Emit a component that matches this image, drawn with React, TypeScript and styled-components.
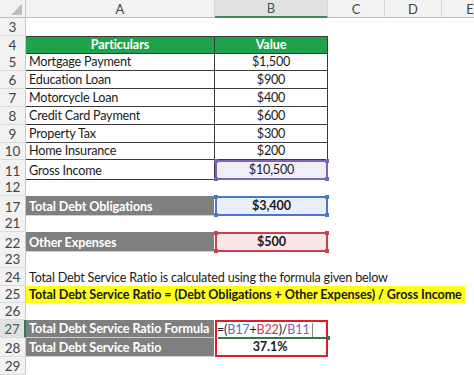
import React from 'react';
import styled, { createGlobalStyle } from 'styled-components';

const GlobalStyle = createGlobalStyle`
  html, body { margin: 0; padding: 0; background: #ffffff; }
  body { font-family: Lato, "Open Sans", "Liberation Sans", sans-serif; overflow: hidden; }
  * { box-sizing: border-box; }
`;

const COLS = '26px 189px 113px 57px 57px 57px';

const Sheet = styled.div`
  width: 474px;
  height: 375px;
  overflow: hidden;
  display: flex;
  flex-direction: column;
  background: #fff;
`;

const Row = styled.div<{ $h: number }>`
  display: grid;
  grid-template-columns: ${COLS};
  height: ${(p) => p.$h}px;
  flex: none;
`;

const Corner = styled.div`
  background: #f2f2f2;
  border-right: 1px solid #c8c8c8;
  border-bottom: 1px solid #bdbdbd;
  display: flex;
  align-items: flex-end;
  justify-content: flex-end;
  padding: 0 3px 2px 0;
`;

const ColHead = styled.div<{ $active?: boolean }>`
  background: ${(p) => (p.$active ? '#e1e1e1' : '#f2f2f2')};
  border-right: 1px solid #d6d6d6;
  border-bottom: ${(p) => (p.$active ? '2px solid #3f8a5d' : '1px solid #bdbdbd')};
  color: ${(p) => (p.$active ? '#3d5e49' : '#444')};
  font-size: 13px;
  display: flex;
  align-items: center;
  justify-content: center;
`;

const RowNum = styled.div<{ $active?: boolean }>`
  background: ${(p) => (p.$active ? '#e1e1e1' : '#f2f2f2')};
  border-right: ${(p) => (p.$active ? '2px solid #2e7d4f' : '1px solid #c8c8c8')};
  border-bottom: 1px solid #dcdcdc;
  color: ${(p) => (p.$active ? '#3c6a4c' : '#444')};
  font-size: 13.5px;
  display: flex;
  align-items: flex-end;
  justify-content: center;
  line-height: 16px;
`;

const Cell = styled.div<{ $align?: 'left' | 'center'; $bold?: boolean; $span?: number }>`
  position: relative;
  display: flex;
  align-items: flex-end;
  justify-content: ${(p) => (p.$align === 'center' ? 'center' : 'flex-start')};
  padding: 0 3px 0 3px;
  font-size: 12.6px;
  letter-spacing: ${(p) => (p.$bold ? '-0.1px' : '-0.2px')};
  line-height: 16px;
  color: #1a1a1a;
  font-weight: ${(p) => (p.$bold ? 700 : 400)};
  white-space: nowrap;
  ${(p) => (p.$span ? `grid-column: span ${p.$span};` : '')}
`;

const TableCell = styled(Cell)<{ $top?: boolean }>`
  border-right: 1px solid #3a3a3a;
  border-bottom: 1px solid #3a3a3a;
  ${(p) => (p.$top ? 'border-top: 1px solid #3a3a3a;' : '')}
`;

const HeadCell = styled(TableCell)`
  background: #1fa34a;
  color: #ffffff;
  font-weight: 700;
  letter-spacing: -0.1px;
`;

const DarkCell = styled(Cell)`
  background: #7f7f7f;
  color: #ffffff;
  font-weight: 700;
  letter-spacing: -0.1px;
  margin-right: 1px;
  border-bottom: 1px solid #d0d0d0;
`;

const RefCell = styled(Cell)<{ $color: string; $fill: string }>`
  background: ${(p) => p.$fill};
  border: 2px solid ${(p) => p.$color};
`;

const Handle = styled.span<{ $color: string; $x: 'l' | 'r'; $y: 't' | 'b' }>`
  position: absolute;
  width: 4px;
  height: 4px;
  background: ${(p) => p.$color};
  ${(p) => (p.$x === 'l' ? 'left: -3px;' : 'right: -3px;')}
  ${(p) => (p.$y === 't' ? 'top: -3px;' : 'bottom: -3px;')}
`;

const ResultCell = styled(Cell)<{ $part: 'top' | 'bottom' }>`
  border-left: 2px solid #e31b23;
  border-right: 2px solid #e31b23;
  ${(p) => (p.$part === 'top' ? 'border-top: 2px solid #e31b23;' : 'border-bottom: 2px solid #e31b23;')}
  padding-left: 0;
`;

const ActiveLine = styled.span`
  position: absolute;
  left: 1px;
  right: -1px;
  bottom: -1px;
  height: 2px;
  background: #2c7a4b;
  &::after {
    content: '';
    position: absolute;
    right: -3px;
    top: -1px;
    width: 4px;
    height: 4px;
    background: #2c7a4b;
  }
`;

const Tok = styled.span<{ $c?: string }>`
  color: ${(p) => p.$c || '#1a1a1a'};
  font-weight: 400;
`;

const Caret = styled.span`
  display: inline-block;
  width: 1px;
  height: 14px;
  background: #8a8a8a;
  margin-left: 2px;
  margin-bottom: 1px;
`;

const Highlight = styled.span`
  background: #ffff1a;
  font-weight: 700;
  letter-spacing: -0.1px;
  padding: 1px 3px 0 3px;
  margin-left: -3px;
`;

const BLUE = '#4a78c8';
const RED = '#c8414f';
const PURPLE = '#8062b8';

const H = [18, 18, 17, 18, 18, 18, 18, 18, 17, 18, 18, 18, 18, 18, 18, 18, 17, 17, 18, 19, 18];

function Handles({ color }: { color: string }) {
  return (
    <>
      <Handle $color={color} $x="l" $y="t" />
      <Handle $color={color} $x="r" $y="t" />
      <Handle $color={color} $x="l" $y="b" />
      <Handle $color={color} $x="r" $y="b" />
    </>
  );
}

const items: [string, string][] = [
  ['Mortgage Payment', '$1,500'],
  ['Education Loan', '$900'],
  ['Motorcycle Loan', '$400'],
  ['Credit Card Payment', '$600'],
  ['Property Tax', '$300'],
  ['Home Insurance', '$200'],
];

export default function App() {
  return (
    <>
      <GlobalStyle />
      <Sheet>
        <Row $h={H[0]}>
          <Corner>
            <svg width="11" height="11" viewBox="0 0 11 11">
              <polygon points="11,0 11,11 0,11" fill="#bcbcbc" />
            </svg>
          </Corner>
          <ColHead>A</ColHead>
          <ColHead $active>B</ColHead>
          <ColHead>C</ColHead>
          <ColHead>D</ColHead>
          <ColHead>E</ColHead>
        </Row>
        <Row $h={H[1]}>
          <RowNum>3</RowNum>
          <Cell />
        </Row>
        <Row $h={H[2]}>
          <RowNum>4</RowNum>
          <HeadCell $align="center" $top>Particulars</HeadCell>
          <HeadCell $align="center" $top>Value</HeadCell>
        </Row>
        {items.map(([label, value], i) => (
          <Row $h={H[3 + i]} key={label}>
            <RowNum>{5 + i}</RowNum>
            <TableCell>{label}</TableCell>
            <TableCell $align="center">{value}</TableCell>
          </Row>
        ))}
        <Row $h={H[9]}>
          <RowNum>11</RowNum>
          <TableCell>Gross Income</TableCell>
          <RefCell $align="center" $color={PURPLE} $fill="#f0eef8">
            $10,500
            <Handles color={PURPLE} />
          </RefCell>
        </Row>
        <Row $h={H[10]}>
          <RowNum>12</RowNum>
        </Row>
        <Row $h={H[11]}>
          <RowNum>17</RowNum>
          <DarkCell>Total Debt Obligations</DarkCell>
          <RefCell $align="center" $bold $color={BLUE} $fill="#e9eff9">
            $3,400
            <Handles color={BLUE} />
          </RefCell>
        </Row>
        <Row $h={H[12]}>
          <RowNum>21</RowNum>
        </Row>
        <Row $h={H[13]}>
          <RowNum>22</RowNum>
          <DarkCell>Other Expenses</DarkCell>
          <RefCell $align="center" $bold $color={RED} $fill="#fbe6ea">
            $500
            <Handles color={RED} />
          </RefCell>
        </Row>
        <Row $h={H[14]}>
          <RowNum>23</RowNum>
        </Row>
        <Row $h={H[15]}>
          <RowNum>24</RowNum>
          <Cell $span={5}>Total Debt Service Ratio is calculated using the formula given below</Cell>
        </Row>
        <Row $h={H[16]}>
          <RowNum>25</RowNum>
          <Cell $span={5}>
            <Highlight>Total Debt Service Ratio = (Debt Obligations + Other Expenses) / Gross Income</Highlight>
          </Cell>
        </Row>
        <Row $h={H[17]}>
          <RowNum>26</RowNum>
        </Row>
        <Row $h={H[18]}>
          <RowNum $active>27</RowNum>
          <DarkCell>Total Debt Service Ratio Formula</DarkCell>
          <ResultCell $part="top">
            <Tok>=(</Tok>
            <Tok $c={BLUE}>B17</Tok>
            <Tok>+</Tok>
            <Tok $c={RED}>B22</Tok>
            <Tok>)/</Tok>
            <Tok $c={PURPLE}>B11</Tok>
            <Caret />
            <ActiveLine />
          </ResultCell>
        </Row>
        <Row $h={H[19]}>
          <RowNum>28</RowNum>
          <DarkCell>Total Debt Service Ratio</DarkCell>
          <ResultCell $part="bottom" $align="center" $bold>37.1%</ResultCell>
        </Row>
        <Row $h={H[20]}>
          <RowNum>29</RowNum>
        </Row>
      </Sheet>
    </>
  );
}
